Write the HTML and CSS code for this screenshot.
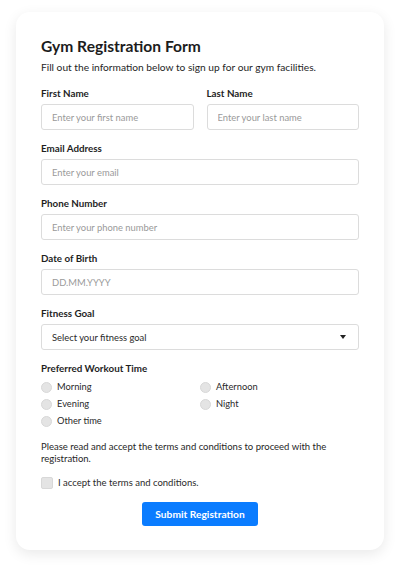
FILE: index.html
```html
<!DOCTYPE html>
<html lang="en">
<head>
<meta charset="utf-8">
<title>Gym Registration Form</title>
<link rel="stylesheet" href="styles.css">
</head>
<body>
<form class="card">
  <h1 class="title">Gym Registration Form</h1>
  <p class="intro">Fill out the information below to sign up for our gym facilities.</p>

  <div class="row">
    <div class="field">
      <label class="label">First Name</label>
      <input class="input" type="text" placeholder="Enter your first name">
    </div>
    <div class="field">
      <label class="label">Last Name</label>
      <input class="input" type="text" placeholder="Enter your last name">
    </div>
  </div>

  <div class="field">
    <label class="label">Email Address</label>
    <input class="input" type="email" placeholder="Enter your email">
  </div>

  <div class="field">
    <label class="label">Phone Number</label>
    <input class="input" type="tel" placeholder="Enter your phone number">
  </div>

  <div class="field">
    <label class="label">Date of Birth</label>
    <input class="input" type="text" placeholder="DD.MM.YYYY">
  </div>

  <div class="field">
    <label class="label">Fitness Goal</label>
    <div class="select">
      <span>Select your fitness goal</span>
      <span class="caret"></span>
    </div>
  </div>

  <div class="field">
    <span class="label">Preferred Workout Time</span>
    <div class="options">
      <label class="option"><span class="radio"></span>Morning</label>
      <label class="option"><span class="radio"></span>Afternoon</label>
      <label class="option"><span class="radio"></span>Evening</label>
      <label class="option"><span class="radio"></span>Night</label>
      <label class="option"><span class="radio"></span>Other time</label>
    </div>
  </div>

  <p class="terms">Please read and accept the terms and conditions to proceed with the registration.</p>

  <label class="accept"><span class="checkbox"></span>I accept the terms and conditions.</label>

  <div class="actions">
    <button class="submit" type="button">Submit Registration</button>
  </div>
</form>
</body>
</html>
```

FILE: styles.css
```css
* {
  box-sizing: border-box;
}

body {
  margin: 0;
  padding: 12px 16px 20px;
  background: #ffffff;
  font-family: Lato, "Open Sans", sans-serif;
  color: #222222;
}

.card {
  display: flex;
  flex-direction: column;
  background: #ffffff;
  border-radius: 14px;
  box-shadow: 0 4px 14px rgba(0, 0, 0, 0.09);
  padding: 24px 25px 24px;
}

.title {
  margin: 0;
  font-size: 15.6px;
  line-height: 20px;
  font-weight: 700;
  color: #1c1c1c;
}

.intro {
  margin: 3px 0 11px;
  font-size: 10.2px;
  line-height: 16px;
  color: #262626;
}

.row {
  display: grid;
  grid-template-columns: 1fr 1fr;
  column-gap: 13px;
}

.field {
  display: flex;
  flex-direction: column;
  margin-bottom: 11px;
}

.label {
  font-size: 9.8px;
  line-height: 14px;
  font-weight: 700;
  color: #1f1f1f;
  margin-bottom: 4px;
}

.input,
.select {
  height: 26px;
  border: 1px solid #dcdcdc;
  border-radius: 3px;
  padding: 0 10px;
  font-family: inherit;
  font-size: 9.4px;
  color: #222;
  background: #fff;
  width: 100%;
}

.input::placeholder {
  color: #9a9a9a;
}

.select {
  display: flex;
  align-items: center;
  justify-content: space-between;
  color: #2a2a2a;
  padding-right: 12px;
}

.caret {
  width: 0;
  height: 0;
  border-left: 3.5px solid transparent;
  border-right: 3.5px solid transparent;
  border-top: 4px solid #222;
}

.options {
  display: grid;
  grid-template-columns: 1fr 1fr;
  row-gap: 5px;
  margin-top: 2px;
}

.option {
  display: flex;
  align-items: center;
  gap: 5px;
  font-size: 9.3px;
  line-height: 12px;
  color: #2a2a2a;
}

.radio {
  width: 11px;
  height: 11px;
  border-radius: 50%;
  background: #e4e4e4;
  border: 1px solid #d8d8d8;
  flex: none;
}

.terms {
  margin: 3px 0 12px;
  font-size: 9.5px;
  line-height: 12px;
  color: #262626;
}

.accept {
  display: flex;
  align-items: center;
  gap: 5px;
  font-size: 9.5px;
  line-height: 12px;
  color: #2a2a2a;
}

.checkbox {
  width: 12px;
  height: 12px;
  border-radius: 2px;
  background: #e4e4e4;
  border: 1px solid #d8d8d8;
  flex: none;
}

.actions {
  display: flex;
  justify-content: center;
  margin-top: 13px;
}

.submit {
  width: 116px;
  height: 24px;
  border: none;
  border-radius: 3px;
  background: #0a7cff;
  color: #ffffff;
  font-family: inherit;
  font-size: 10.2px;
  font-weight: 700;
}
```
